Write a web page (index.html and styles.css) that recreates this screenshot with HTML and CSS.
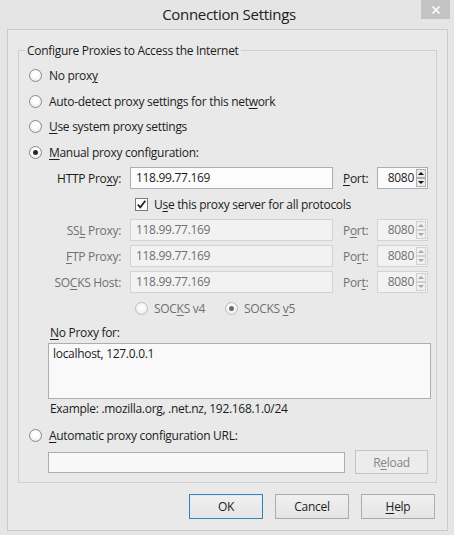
FILE: index.html
```html
<!DOCTYPE html>
<html>
<head>
<meta charset="utf-8">
<title>Connection Settings</title>
<link rel="stylesheet" href="styles.css">
</head>
<body>
<div class="window">
  <div class="titlebar">
    <span class="title">Connection Settings</span>
    <span class="close"><svg width="10" height="10" viewBox="0 0 10 10"><path d="M1.5 1.5 L8.5 8.5 M8.5 1.5 L1.5 8.5" stroke="#fff" stroke-width="1.6" fill="none"/></svg></span>
  </div>
  <div class="client">
    <fieldset class="group">
      <legend>Configure Proxies to Access the Internet</legend>
      <div class="opt"><span class="radio"></span><span>No prox<u>y</u></span></div>
      <div class="opt"><span class="radio"></span><span>Auto-detect proxy settings for this net<u>w</u>ork</span></div>
      <div class="opt"><span class="radio"></span><span><u>U</u>se system proxy settings</span></div>
      <div class="opt"><span class="radio checked"></span><span><u>M</u>anual proxy configuration:</span></div>

      <div class="prow">
        <span class="plabel">HTTP Pro<u>x</u>y:</span>
        <span class="field">118.99.77.169</span>
        <span class="port"><u>P</u>ort:</span>
        <span class="spin"><span class="num">8080</span><span class="arrows"><span class="arrow"><span class="tri up"></span></span><span class="arrow"><span class="tri down"></span></span></span></span>
      </div>
      <div class="crow"><span class="check"><svg width="11" height="11" viewBox="0 0 11 11"><path d="M1.8 5.6 L4.3 8.3 L9.3 1.8" stroke="#222" stroke-width="1.8" fill="none"/></svg></span><span>U<u>s</u>e this proxy server for all protocols</span></div>
      <div class="prow off">
        <span class="plabel">SS<u>L</u> Proxy:</span>
        <span class="field">118.99.77.169</span>
        <span class="port">P<u>o</u>rt:</span>
        <span class="spin"><span class="num">8080</span><span class="arrows"><span class="arrow"><span class="tri up"></span></span><span class="arrow"><span class="tri down"></span></span></span></span>
      </div>
      <div class="prow off">
        <span class="plabel"><u>F</u>TP Proxy:</span>
        <span class="field">118.99.77.169</span>
        <span class="port">Po<u>r</u>t:</span>
        <span class="spin"><span class="num">8080</span><span class="arrows"><span class="arrow"><span class="tri up"></span></span><span class="arrow"><span class="tri down"></span></span></span></span>
      </div>
      <div class="prow off">
        <span class="plabel">SO<u>C</u>KS Host:</span>
        <span class="field">118.99.77.169</span>
        <span class="port">Por<u>t</u>:</span>
        <span class="spin"><span class="num">8080</span><span class="arrows"><span class="arrow"><span class="tri up"></span></span><span class="arrow"><span class="tri down"></span></span></span></span>
      </div>
      <div class="vrow off">
        <span class="radio"></span><span>SOC<u>K</u>S v4</span>
        <span class="radio checked v5"></span><span>SOCKS <u>v</u>5</span>
      </div>
      <div class="nplabel"><u>N</u>o Proxy for:</div>
      <div class="textarea">localhost, 127.0.0.1</div>
      <div class="example">Example: .mozilla.org, .net.nz, 192.168.1.0/24</div>
      <div class="opt auto"><span class="radio"></span><span><u>A</u>utomatic proxy configuration URL:</span></div>
      <div class="urow">
        <span class="url"></span>
        <span class="btn reload">R<u>e</u>load</span>
      </div>
    </fieldset>
    <div class="buttons">
      <span class="btn default">OK</span>
      <span class="btn">Cancel</span>
      <span class="btn"><u>H</u>elp</span>
    </div>
  </div>
</div>
</body>
</html>
```

FILE: styles.css
```css
html, body {
  margin: 0;
  padding: 0;
}
body {
  background: #e5e5e5;
  font-family: "Open Sans", "Noto Sans", sans-serif;
  font-size: 12px;
  letter-spacing: -0.3px;
  color: #1c1c1c;
}
u {
  text-decoration-thickness: 1px;
  text-underline-offset: 2px;
}
.window {
  width: 454px;
  height: 535px;
  display: flex;
  flex-direction: column;
}
.titlebar {
  height: 29px;
  position: relative;
  display: flex;
  align-items: center;
  justify-content: center;
}
.title {
  font-size: 15px;
  color: #202020;
  margin-left: 4px;
  margin-top: -1px;
}
.close {
  position: absolute;
  right: 4px;
  top: 0;
  width: 29px;
  height: 19px;
  background: #c3c3c3;
  display: flex;
  align-items: center;
  justify-content: center;
}
.client {
  margin: 0 6px 0 7px;
  height: 502px;
  box-sizing: border-box;
  border: 1px solid #cbcbcb;
  background: #e9e9e9;
  padding: 12px 10px 0 10px;
  display: flex;
  flex-direction: column;
}
.group {
  margin: 0;
  border: 1px solid #cfcfcf;
  padding: 4px 0 6px 0;
  min-width: 0;
}
.group legend {
  margin-left: 6px;
  padding: 0 2px;
  line-height: 17px;
}
.opt {
  height: 25.5px;
  display: flex;
  align-items: center;
  gap: 7px;
  padding-left: 10px;
}
.radio {
  width: 13px;
  height: 13px;
  box-sizing: border-box;
  border-radius: 50%;
  border: 1px solid #8a8a8a;
  background: radial-gradient(circle at 50% 40%, #ffffff 30%, #e2e2e2 100%);
  display: flex;
  align-items: center;
  justify-content: center;
  flex: none;
}
.radio.checked::after {
  content: "";
  width: 5px;
  height: 5px;
  border-radius: 50%;
  background: #2a2a2a;
}
.prow {
  height: 26px;
  display: flex;
  align-items: center;
}
.plabel {
  width: 102px;
  text-align: right;
  margin-right: 9px;
  flex: none;
}
.field {
  width: 203px;
  height: 22px;
  box-sizing: border-box;
  border: 1px solid #abadb3;
  background: #fcfcfc;
  padding-left: 5px;
  line-height: 20px;
  flex: none;
}
.port {
  width: 34px;
  margin-left: 10px;
  flex: none;
}
.spin {
  width: 51px;
  height: 22px;
  box-sizing: border-box;
  border: 1px solid #abadb3;
  background: #fcfcfc;
  display: flex;
  align-items: stretch;
  flex: none;
}
.spin .num {
  flex: 1;
  text-align: right;
  line-height: 20px;
  padding-right: 2px;
}
.arrows {
  width: 10px;
  display: flex;
  flex-direction: column;
  padding: 1px 1px 1px 0;
}
.arrow {
  flex: 1;
  border: 1px solid #acacac;
  background: #ececec;
  display: flex;
  align-items: center;
  justify-content: center;
}
.tri {
  width: 0;
  height: 0;
  border-left: 3px solid transparent;
  border-right: 3px solid transparent;
}
.tri.up {
  border-bottom: 3px solid #111;
}
.tri.down {
  border-top: 3px solid #111;
}
.off {
  color: #707070;
}
.off .field, .off .spin {
  border-color: #d3d3d3;
  background: #f2f2f2;
}
.off .arrow {
  border-color: #d0d0d0;
  background: #f0f0f0;
}
.off .tri.up {
  border-bottom-color: #a8a8a8;
}
.off .tri.down {
  border-top-color: #a8a8a8;
}
.crow {
  height: 26px;
  display: flex;
  align-items: center;
  gap: 6px;
  padding-left: 116px;
}
.check {
  width: 13px;
  height: 13px;
  box-sizing: border-box;
  border: 1px solid #7a7a7a;
  background: #fdfdfd;
  display: flex;
  align-items: center;
  justify-content: center;
  flex: none;
}
.vrow {
  height: 26px;
  display: flex;
  align-items: center;
  gap: 6px;
  padding-left: 116px;
}
.vrow .radio {
  border-color: #bdbdbd;
  background: radial-gradient(circle at 50% 40%, #fafafa 30%, #e6e6e6 100%);
}
.vrow .radio.checked::after {
  background: #6a6a6a;
}
.vrow .v5 {
  margin-left: 14px;
}
.nplabel {
  margin-top: 2px;
  height: 20px;
  line-height: 20px;
  padding-left: 31px;
}
.textarea {
  margin-left: 29px;
  width: 383px;
  height: 56px;
  box-sizing: border-box;
  border: 1px solid #abadb3;
  background: #f9f9f9;
  padding: 1px 4px;
  line-height: 17px;
}
.example {
  height: 20px;
  line-height: 20px;
  padding-left: 31px;
}
.opt.auto {
  margin-top: 3px;
  height: 26px;
}
.urow {
  height: 28px;
  display: flex;
  align-items: center;
  padding-left: 29px;
}
.url {
  width: 297px;
  height: 21px;
  box-sizing: border-box;
  border: 1px solid #abadb3;
  background: #f8f8f8;
}
.btn {
  width: 74px;
  height: 25px;
  box-sizing: border-box;
  border: 1px solid #acacac;
  background: linear-gradient(#f0f0f0, #e5e5e5);
  display: flex;
  align-items: center;
  justify-content: center;
  color: #1c1c1c;
}
.btn.reload {
  width: 73px;
  height: 24px;
  margin-left: 10px;
  border-color: #c4c4c4;
  background: #ececec;
  color: #868686;
}
.btn.default {
  border-color: #3c7fb1;
  box-shadow: inset 0 0 0 1px #dbeaf5;
}
.buttons {
  margin-top: 11px;
  display: flex;
  justify-content: flex-end;
  gap: 12px;
  padding-right: 2px;
}
```
